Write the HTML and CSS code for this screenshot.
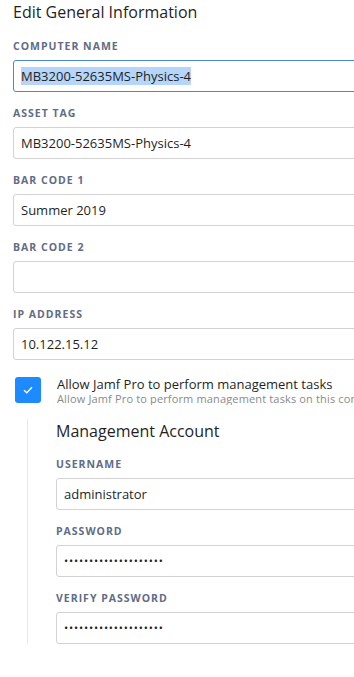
FILE: index.html
```html
<!DOCTYPE html>
<html lang="en">
  <head>
    <meta charset="UTF-8" />
    <meta name="viewport" content="width=device-width, initial-scale=1.0" />
    <title>Edit General Information</title>
    <link rel="stylesheet" href="styles.css">
  </head>
  <body>
    <h1 class="heading">Edit General Information</h1>

    <div class="field">
      <label class="label">Computer Name</label>
      <div class="input focused"><span class="selected">MB3200-52635MS-Physics-4</span></div>
    </div>
    <div class="field">
      <label class="label">Asset Tag</label>
      <div class="input">MB3200-52635MS-Physics-4</div>
    </div>
    <div class="field">
      <label class="label">Bar Code 1</label>
      <div class="input">Summer 2019</div>
    </div>
    <div class="field">
      <label class="label">Bar Code 2</label>
      <div class="input"></div>
    </div>
    <div class="field">
      <label class="label">IP Address</label>
      <div class="input">10.122.15.12</div>
    </div>

    <div class="check-row">
      <span class="checkbox">
        <svg width="10" height="8" viewBox="0 0 10 8">
          <path d="M1 4.2 L3.8 6.8 L9 1.2" fill="none" stroke="#fff" stroke-width="1.3" />
        </svg>
      </span>
      <div class="check-text">
        <div class="check-title">Allow Jamf Pro to perform management tasks</div>
        <div class="check-sub">Allow Jamf Pro to perform management tasks on this computer</div>
      </div>
    </div>

    <div class="nested">
      <h2 class="subheading">Management Account</h2>
      <div class="field">
        <label class="label">Username</label>
        <div class="input">administrator</div>
      </div>
      <div class="field">
        <label class="label">Password</label>
        <div class="input dots">••••••••••••••••••••</div>
      </div>
      <div class="field">
        <label class="label">Verify Password</label>
        <div class="input dots">••••••••••••••••••••</div>
      </div>
    </div>
  </body>
</html>
```

FILE: styles.css
```css
* {
  box-sizing: border-box;
}

body {
  margin: 0;
  padding: 0 0 0 13px;
  overflow: hidden;
  font-family: "Open Sans", sans-serif;
  color: #1f1f1f;
  background: #fff;
}

.heading {
  margin: 0;
  font-size: 16px;
  font-weight: 400;
  line-height: 24px;
}

.field {
  margin-top: 14px;
}

.heading + .field {
  margin-top: 15px;
}

.label {
  display: block;
  font-size: 10.5px;
  font-weight: 700;
  letter-spacing: 1px;
  text-transform: uppercase;
  color: #616c85;
  line-height: 15px;
  margin-bottom: 6px;
}

.input {
  width: 420px;
  height: 32px;
  padding: 0 7px;
  border: 1px solid #d2d2d2;
  border-radius: 3px;
  font-size: 13px;
  line-height: 30px;
  white-space: nowrap;
}

.input.focused {
  border-color: #4a88cc;
}

.selected {
  background: #b5d5fb;
}

.dots {
  font-size: 11px;
  letter-spacing: 0.85px;
}

.check-row {
  display: flex;
  align-items: flex-start;
  margin-top: 17px;
  margin-left: 2px;
  white-space: nowrap;
}

.checkbox {
  flex: none;
  display: flex;
  align-items: center;
  justify-content: center;
  width: 26px;
  height: 26px;
  border-radius: 3px;
  background: #1d8bff;
}

.check-text {
  margin: -1px 0 0 16px;
  overflow: hidden;
}

.check-title {
  font-size: 13px;
  line-height: 17px;
}

.check-sub {
  font-size: 11px;
  line-height: 12px;
  letter-spacing: 0.15px;
  color: #8a8a8a;
}

.nested {
  margin: 14px 0 0 14px;
  padding-left: 28px;
  border-left: 1px solid #e8e8e8;
}

.subheading {
  margin: 0;
  font-size: 16px;
  font-weight: 400;
  line-height: 24px;
}
```
